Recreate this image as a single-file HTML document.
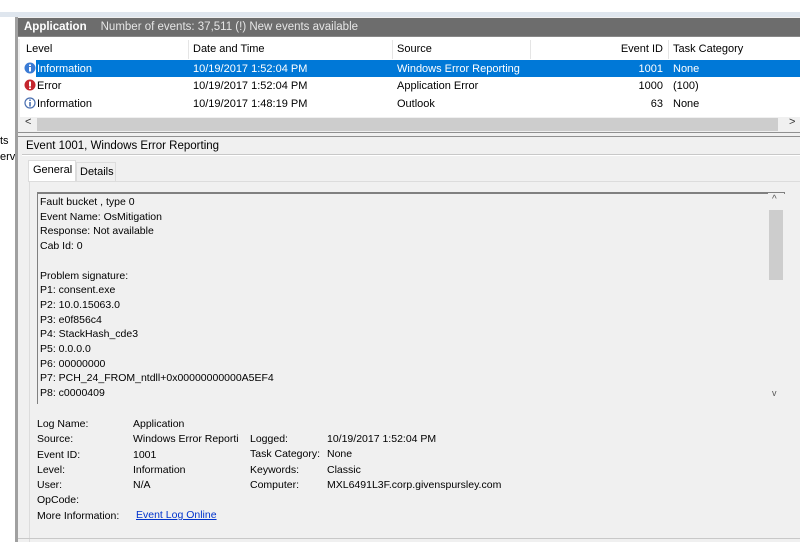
<!DOCTYPE html>
<html><head><style>
*{margin:0;padding:0;box-sizing:border-box}
body{width:800px;height:542px;overflow:hidden;background:#f0f0f0;font-family:"Liberation Sans",sans-serif;font-size:11px;color:#000;position:relative}
.a{position:absolute;white-space:nowrap}
.r{left:590px;width:73px;text-align:right}
</style></head><body>
<div class="a" style="left:0;top:0;width:800px;height:12px;background:#fff"></div>
<div class="a" style="left:0;top:12px;width:800px;height:5px;background:#dfe6ee"></div>
<div class="a" style="left:0;top:17px;width:16px;height:525px;background:#fff"></div>
<div class="a" style="left:0;top:135px;font-size:11px">ts</div>
<div class="a" style="left:0;top:151px;font-size:11px">ervi</div>
<div class="a" style="left:15px;top:17px;width:3px;height:525px;background:#a0a0a0"></div>
<div class="a" style="left:18px;top:18px;width:782px;height:18px;background:#6d6d6d;color:#fff;padding:3px 0 0 6px;font-size:11.5px"><b>Application</b><span style="color:#e6e6e6;margin-left:14px">Number of events: 37,511 (!) New events available</span></div>
<div class="a" style="left:18px;top:36px;width:782px;height:3px;background:#fff;border-top:1px solid #888"></div>
<div class="a" style="left:20px;top:39px;width:780px;height:78px;background:#fff"></div>
<div class="a" style="left:26px;top:43px">Level</div>
<div class="a" style="left:188px;top:40px;width:1px;height:19px;background:#e5e5e5"></div>
<div class="a" style="left:193px;top:43px">Date and Time</div>
<div class="a" style="left:392px;top:40px;width:1px;height:19px;background:#e5e5e5"></div>
<div class="a" style="left:397px;top:43px">Source</div>
<div class="a" style="left:530px;top:40px;width:1px;height:19px;background:#e5e5e5"></div>
<div class="a r" style="top:43px">Event ID</div>
<div class="a" style="left:668px;top:40px;width:1px;height:19px;background:#e5e5e5"></div>
<div class="a" style="left:673px;top:43px">Task Category</div>
<div class="a" style="left:36px;top:60px;width:764px;height:17px;background:#0078d7"></div>
<svg class="a" style="left:24px;top:62px" width="12" height="12"><circle cx="6" cy="6" r="5.5" fill="#3a7bd5"/><rect x="5" y="5" width="2" height="4.5" fill="#fff"/><rect x="5" y="2.5" width="2" height="1.5" fill="#fff"/></svg>
<svg class="a" style="left:24px;top:79px" width="12" height="12"><circle cx="6" cy="6" r="5.5" fill="#c4262e"/><rect x="5" y="2.5" width="2" height="5" fill="#fff"/><rect x="5" y="8.5" width="2" height="1.5" fill="#fff"/></svg>
<svg class="a" style="left:24px;top:97px" width="12" height="12"><circle cx="6" cy="6" r="5" fill="#fff" stroke="#4a6fb0" stroke-width="1.2"/><rect x="5.2" y="5" width="1.6" height="4.5" fill="#4a6fb0"/><rect x="5.2" y="2.5" width="1.6" height="1.5" fill="#4a6fb0"/></svg>
<div class="a" style="left:37px;top:63px;color:#fff">Information</div>
<div class="a" style="left:193px;top:63px;color:#fff">10/19/2017 1:52:04 PM</div>
<div class="a" style="left:397px;top:63px;color:#fff">Windows Error Reporting</div>
<div class="a r" style="top:63px;color:#fff">1001</div>
<div class="a" style="left:673px;top:63px;color:#fff">None</div>
<div class="a" style="left:37px;top:80px">Error</div>
<div class="a" style="left:193px;top:80px">10/19/2017 1:52:04 PM</div>
<div class="a" style="left:397px;top:80px">Application Error</div>
<div class="a r" style="top:80px">1000</div>
<div class="a" style="left:673px;top:80px">(100)</div>
<div class="a" style="left:37px;top:98px">Information</div>
<div class="a" style="left:193px;top:98px">10/19/2017 1:48:19 PM</div>
<div class="a" style="left:397px;top:98px">Outlook</div>
<div class="a r" style="top:98px">63</div>
<div class="a" style="left:673px;top:98px">None</div>
<div class="a" style="left:20px;top:117px;width:780px;height:15px;background:#f0f0f0"></div>
<div class="a" style="left:37px;top:118px;width:741px;height:13px;background:#cdcdcd"></div>
<div class="a" style="left:25px;top:116px;font-size:11px;color:#333">&lt;</div>
<div class="a" style="left:789px;top:116px;font-size:11px;color:#333">&gt;</div>
<div class="a" style="left:18px;top:132px;width:782px;height:5px;border-top:1px solid #909090;border-bottom:1px solid #909090;background:#f0f0f0"></div>
<div class="a" style="left:26px;top:140px;font-size:11.5px">Event 1001, Windows Error Reporting</div>
<div class="a" style="left:22px;top:154px;width:778px;height:1px;background:#c8c8c8"></div>
<div class="a" style="left:22px;top:155px;width:778px;height:1px;background:#fff"></div>
<div class="a" style="left:28px;top:160px;width:48px;height:22px;background:#fff;border:1px solid #dcdcdc;border-bottom:none;padding:3px 0 0 4px">General</div>
<div class="a" style="left:76px;top:162px;width:40px;height:19px;border:1px solid #dcdcdc;border-bottom:none;padding:3px 0 0 3px">Details</div>
<div class="a" style="left:29px;top:181px;width:771px;height:361px;border-top:1px solid #dcdcdc;border-left:1px solid #dcdcdc"></div>
<div class="a" style="left:37px;top:192px;width:748px;height:212px;border-top:2px solid #808080;border-left:1px solid #808080;background:#f0f0f0"></div>
<div class="a" style="left:768px;top:193px;width:16px;height:210px;background:#f0f0f0"></div>
<div class="a" style="left:769px;top:210px;width:14px;height:70px;background:#cdcdcd"></div>
<div class="a" style="left:772px;top:194px;color:#555;font-size:10px">^</div>
<div class="a" style="left:772px;top:388px;color:#555;font-size:9px">v</div>
<div class="a" style="left:40px;top:195px;line-height:14.7px;font-size:10.5px;white-space:pre">Fault bucket , type 0
Event Name: OsMitigation
Response: Not available
Cab Id: 0

Problem signature:
P1: consent.exe
P2: 10.0.15063.0
P3: e0f856c4
P4: StackHash_cde3
P5: 0.0.0.0
P6: 00000000
P7: PCH_24_FROM_ntdll+0x00000000000A5EF4
P8: c0000409</div>
<div class="a" style="left:37px;top:417px;line-height:15.3px;font-size:10.5px;white-space:pre">Log Name:
Source:
Event ID:
Level:
User:
OpCode:
More Information:</div>
<div class="a" style="left:133px;top:417px;line-height:15.3px;font-size:10.5px;white-space:pre">Application
Windows Error Reporti
1001
Information
N/A</div>
<div class="a" style="left:136px;top:509px;font-size:10.5px;color:#0033cc;text-decoration:underline">Event Log Online </div>
<div class="a" style="left:250px;top:432px;line-height:15.3px;font-size:10.5px;white-space:pre">Logged:
Task Category:
Keywords:
Computer:</div>
<div class="a" style="left:327px;top:432px;line-height:15.3px;font-size:10.5px;white-space:pre">10/19/2017 1:52:04 PM
None
Classic
MXL6491L3F.corp.givenspursley.com</div>
<div class="a" style="left:18px;top:538px;width:782px;height:1px;background:#c8c8c8"></div>
</body></html>
